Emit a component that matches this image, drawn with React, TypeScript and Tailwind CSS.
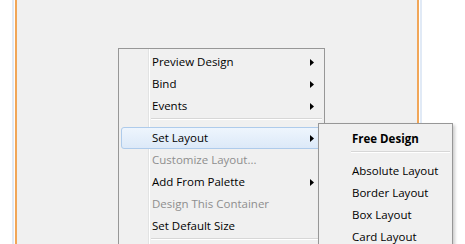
import React from 'react';

type Item = { label: string; arrow?: boolean; disabled?: boolean; separator?: boolean; active?: boolean; bold?: boolean };

const mainItems: Item[] = [
  { label: 'Preview Design', arrow: true },
  { label: 'Bind', arrow: true },
  { label: 'Events', arrow: true },
  { label: '', separator: true },
  { label: 'Set Layout', arrow: true, active: true },
  { label: 'Customize Layout...', disabled: true },
  { label: 'Add From Palette', arrow: true },
  { label: 'Design This Container', disabled: true },
  { label: 'Set Default Size' },
  { label: '', separator: true },
];

const layoutItems: Item[] = [
  { label: 'Free Design', bold: true },
  { label: '', separator: true },
  { label: 'Absolute Layout' },
  { label: 'Border Layout' },
  { label: 'Box Layout' },
  { label: 'Card Layout' },
];

function Arrow() {
  return (
    <svg width="4" height="7" viewBox="0 0 4 7" className="shrink-0">
      <path d="M0 0 L4 3.5 L0 7 Z" fill="#000" />
    </svg>
  );
}

function MenuRow({ item }: { item: Item }) {
  if (item.separator) {
    return (
      <div className="h-[10px] pl-[30px] pt-[1px]">
        <div className="h-[1px] bg-[#d7d7d7]" />
        <div className="h-[1px] bg-white" />
      </div>
    );
  }
  const box = item.active
    ? 'rounded-[3px] border border-[#aecbeb] bg-gradient-to-b from-[#eef5fd] to-[#dce9f8] pl-[30px] pr-[7px]'
    : 'pl-[31px] pr-[8px]';
  return (
    <div className={`relative flex h-[22px] items-center ${box}`}>
      <span
        className={`flex-1 ${item.bold ? 'font-bold' : ''} ${item.disabled ? 'text-[#8e8e8e]' : 'text-black'}`}
      >
        {item.label}
      </span>
      {item.arrow && <Arrow />}
    </div>
  );
}

export default function App() {
  return (
    <div className="relative h-[244px] w-[465px] overflow-hidden bg-white text-[11.5px] [font-family:'Open_Sans',sans-serif]">
      <div className="ml-[12px] h-full w-[410px] border-x-2 border-[#e1eaf6] bg-white">
        <div className="ml-[1px] h-full w-[404px] border-x-2 border-[#f1a658] bg-[#f0f0f0]" />
      </div>

      {/* context menu */}
      <div className="absolute left-[118px] top-[48px] w-[207px] border border-[#979797] bg-[#f0f0f0] p-[2px] pb-[20px]">
        <div className="absolute bottom-0 left-[29px] top-0 w-[2px] border-l border-[#e2e3e3]">
          <div className="h-full w-[1px] bg-white" />
        </div>
        <div className="relative">
          {mainItems.map((item, i) => (
            <MenuRow key={i} item={item} />
          ))}
        </div>
      </div>

      {/* Set Layout submenu */}
      <div className="absolute left-[318px] top-[123px] w-[135px] border border-[#979797] bg-[#f0f0f0] p-[2px] pt-[4px] pb-[20px] shadow-[2px_2px_3px_rgba(0,0,0,0.2)]">
        <div className="relative">
          {layoutItems.map((item, i) => (
            <MenuRow key={i} item={item} />
          ))}
        </div>
      </div>
    </div>
  );
}
